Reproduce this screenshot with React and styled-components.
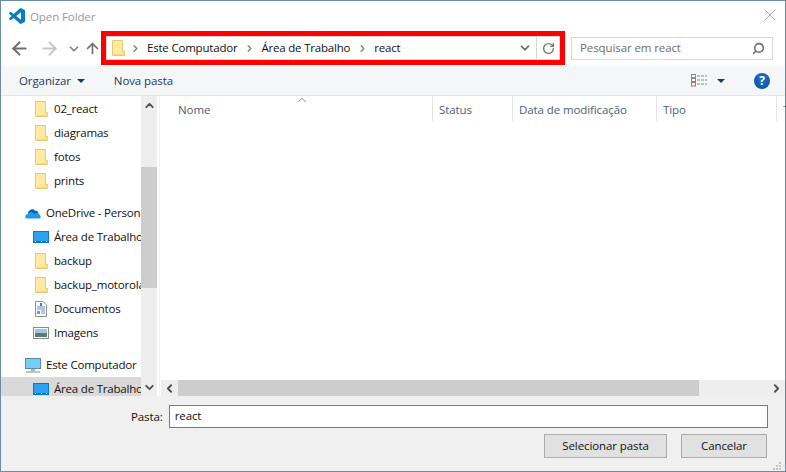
import React from 'react';
import styled, { createGlobalStyle } from 'styled-components';
import { ArrowLeft, ArrowRight, ArrowUp, ChevronDown, ChevronUp, ChevronLeft, ChevronRight, RotateCw, Search, X } from 'lucide-react';

const GlobalStyle = createGlobalStyle`
    html, body {
        margin: 0;
        padding: 0;
        background: #fff;
    }
`

const Window = styled.div`
    position: relative;
    width: 786px;
    height: 472px;
    box-sizing: border-box;
    border: 1px solid #6b8aa6;
    display: flex;
    flex-direction: column;
    overflow: hidden;
    background: #fff;
    font-family: "Open Sans", "Noto Sans", sans-serif;
    font-size: 11.5px;
    letter-spacing: -0.1px;
    color: #111;
`

const TitleBar = styled.div`
    height: 30px;
    display: flex;
    align-items: center;
    padding: 0 5px 0 8px;
    gap: 5px;
    flex-shrink: 0;
`

const Title = styled.span`
    color: #999;
    flex: 1;
`

const CloseIcon = styled(X)`
    margin-bottom: 2px;
    color: #8a8a8a;
`

const NavRow = styled.div`
    height: 35px;
    display: flex;
    align-items: center;
    flex-shrink: 0;
    padding-left: 8px;
`

const NavButton = styled.div`
    width: ${props => props.$width}px;
    box-sizing: border-box;
    padding-left: ${props => props.$inset || 0}px;
    display: flex;
    align-items: center;
    justify-content: ${props => props.$center ? 'center' : 'flex-start'};
    color: ${props => props.$color};
`

const Highlight = styled.div`
    width: 464px;
    height: 34px;
    box-sizing: border-box;
    border: 5px solid #fe0000;
    display: flex;
    margin-right: 6px;
    margin-top: -1px;
    position: relative;
`

const AddressBar = styled.div`
    flex: 1;
    border: 1px solid #d9d9d9;
    display: flex;
    align-items: center;
    padding-left: 5px;
`

const Crumb = styled.span`
    padding-bottom: 2px;
    letter-spacing: -0.2px;
`

const CrumbArrow = styled.div`
    display: flex;
    margin: ${props => props.$margin};
    color: #808080;
`

const AddressTools = styled.div`
    margin-left: auto;
    display: flex;
    align-items: center;
    height: 100%;
`

const DropZone = styled.div`
    width: 23px;
    height: 100%;
    display: flex;
    align-items: center;
    justify-content: center;
    color: #666;
    border-right: 1px solid #d9d9d9;
`

const RefreshZone = styled.div`
    width: 22px;
    display: flex;
    justify-content: center;
    color: #7a7a7a;
`

const SearchBox = styled.div`
    width: 202px;
    height: 23px;
    box-sizing: border-box;
    border: 1px solid #d9d9d9;
    display: flex;
    align-items: center;
    justify-content: space-between;
    padding: 0 7px 2px 8px;
    color: #6d6d6d;
`

const SearchIcon = styled(Search)`
    transform: scaleX(-1);
    margin-top: 2px;
`

const Toolbar = styled.div`
    height: 30px;
    flex-shrink: 0;
    box-sizing: border-box;
    background: #f5f6f7;
    border-bottom: 1px solid #e6e6e6;
    display: flex;
    align-items: center;
    padding: 0 15px 0 18px;
    color: #1e395b;
`

const Caret = styled.div`
    width: 0;
    height: 0;
    border-left: 4px solid transparent;
    border-right: 4px solid transparent;
    border-top: 4px solid #1e395b;
    margin: ${props => props.$margin};
`

const ViewTools = styled.div`
    margin-left: auto;
    display: flex;
    align-items: center;
`

const HelpBadge = styled.div`
    width: 16px;
    height: 16px;
    border-radius: 50%;
    background: radial-gradient(circle at 50% 35%, #1b74cc, #07509c);
    color: #fff;
    font-weight: 700;
    font-size: 12px;
    line-height: 16px;
    text-align: center;
    margin-left: 29px;
`

const Main = styled.div`
    flex: 1;
    display: flex;
    min-height: 0;
    overflow: hidden;
`

const Sidebar = styled.div`
    width: 140px;
    flex-shrink: 0;
    overflow: hidden;
    padding-top: 1px;
`

const NavItem = styled.div`
    height: 24px;
    box-sizing: border-box;
    padding-bottom: 2px;
    display: flex;
    align-items: center;
    gap: 5px;
    padding-left: ${props => props.$top ? '24px' : '32px'};
    white-space: nowrap;
    letter-spacing: -0.2px;
    background: ${props => props.$selected ? '#d9d9d9' : 'transparent'};
    margin-top: ${props => props.$spaced ? '8px' : '0'};
`

const IconSlot = styled.div`
    width: 16px;
    margin-top: 2px;
    display: flex;
    justify-content: center;
    flex-shrink: 0;
`

const VerticalScroll = styled.div`
    width: 16px;
    flex-shrink: 0;
    background: #eeeeee;
    display: flex;
    flex-direction: column;
    align-items: stretch;
`

const ScrollButton = styled.div`
    height: ${props => props.$size}px;
    width: ${props => props.$wide ? '17px' : 'auto'};
    display: flex;
    align-items: center;
    justify-content: center;
    color: #505050;
    flex-shrink: 0;
`

const VerticalThumb = styled.div`
    height: 121px;
    background: #cdcdcd;
    margin-top: 53px;
    margin-bottom: auto;
`

const Divider = styled.div`
    width: 2px;
    flex-shrink: 0;
    background: #fff;
`

const Content = styled.div`
    flex: 1;
    min-width: 0;
    display: flex;
    flex-direction: column;
    border-left: 1px solid #f3f3f3;
`

const Columns = styled.div`
    position: relative;
    height: 25px;
    display: flex;
    flex-shrink: 0;
`

const Column = styled.div`
    width: ${props => props.$width}px;
    box-sizing: border-box;
    flex-shrink: 0;
    padding-left: ${props => props.$pad || 6}px;
    border-right: ${props => props.$last ? 'none' : '1px solid #e5e5e5'};
    line-height: 28px;
    color: #4c607a;
`

const SortArrow = styled.div`
    position: absolute;
    left: 135px;
    top: -3px;
    color: #808080;
    display: flex;
`

const ListArea = styled.div`
    flex: 1;
`

const HorizontalScroll = styled.div`
    height: 16px;
    margin-left: 1px;
    background: #eeeeee;
    display: flex;
    flex-shrink: 0;
`

const HorizontalThumb = styled.div`
    width: 521px;
    background: #cdcdcd;
    margin-right: auto;
`

const Footer = styled.div`
    height: 75px;
    box-sizing: border-box;
    flex-shrink: 0;
    background: #f0f0f0;
    padding: 9px 17px 0 130px;
    display: flex;
    flex-direction: column;
`

const FolderRow = styled.div`
    display: flex;
    align-items: center;
    gap: 6px;
`

const FolderInput = styled.div`
    flex: 1;
    height: 23px;
    box-sizing: border-box;
    border: 1px solid #7a7a7a;
    background: #fff;
    padding-left: 5px;
    line-height: 19px;
`

const Buttons = styled.div`
    display: flex;
    justify-content: flex-end;
    gap: 14px;
    margin: 6px 1px 0 0;
`

const Button = styled.div`
    width: ${props => props.$width}px;
    height: 24px;
    box-sizing: border-box;
    border: 1px solid #adadad;
    background: #e1e1e1;
    text-align: center;
    line-height: 22px;
`

const Grip = styled.svg`
    position: absolute;
    right: 3px;
    bottom: 1px;
`

function VsCodeLogo() {
    return (
        <svg width="16" height="16" viewBox="0 0 24 24">
            <path fill="#0a7cc7" d="M23.15 2.587L18.21.21a1.494 1.494 0 0 0-1.705.29l-9.46 8.63-4.12-3.128a.999.999 0 0 0-1.276.057L.327 7.261A1 1 0 0 0 .326 8.74L3.899 12 .326 15.26a1 1 0 0 0 .001 1.479L1.65 17.94a.999.999 0 0 0 1.276.057l4.12-3.128 9.46 8.63a1.492 1.492 0 0 0 1.704.29l4.942-2.377A1.5 1.5 0 0 0 24 20.06V3.939a1.5 1.5 0 0 0-.85-1.352zm-5.146 14.861L10.826 12l7.178-5.448v10.896z" />
        </svg>
    );
}

function FolderIcon() {
    return (
        <svg width="13" height="16" viewBox="0 0 13 16">
            <path d="M0.5 0.5 H10.5 V11.5 H12.5 V15.5 H0.5 Z" fill="#ffe9a3" stroke="#ecc869" />
            <path d="M10.5 11.5 V14.5 H1.5" fill="none" stroke="#f3d98a" />
        </svg>
    );
}

function DesktopIcon() {
    return (
        <svg width="16" height="12" viewBox="0 0 16 12">
            <rect x="0" y="0" width="16" height="12" fill="#0a78c8" />
            <rect x="1" y="1" width="14" height="9" fill="#2fa0ee" />
            <rect x="2" y="10" width="1" height="1" fill="#fff" />
            <rect x="8" y="10" width="1" height="1" fill="#fff" />
            <rect x="13" y="10" width="1" height="1" fill="#fff" />
        </svg>
    );
}

function CloudIcon() {
    return (
        <svg width="16" height="11" viewBox="0 0 16 11">
            <path fill="#0a5fb4" d="M3 5 C4 1 9 0 10 3 C12 2 14 4 13 6 L4 8 Z" />
            <path fill="#1c9be8" d="M1 10.5 C-1 8 1 6 3 6 C4 4 8 3 9 6 C11 4 15 5 15 7.5 C16.5 9 15.5 10.5 14 10.5 Z" />
        </svg>
    );
}

function DocumentIcon() {
    return (
        <svg width="12" height="16" viewBox="0 0 12 16">
            <path d="M0.5 0.5 H8 L11.5 4 V15.5 H0.5 Z" fill="#fff" stroke="#8e8e8e" />
            <path d="M2 6 H10 M2 8 H10 M6 10 H10 M6 12 H10" stroke="#5d8fc4" />
            <rect x="2" y="10" width="3" height="3" fill="#6f9ac6" />
            <rect x="5" y="2" width="2" height="3" fill="#2f7fd0" />
        </svg>
    );
}

function ImageIcon() {
    return (
        <svg width="16" height="12" viewBox="0 0 16 12">
            <rect x="0.5" y="0.5" width="15" height="11" fill="#fff" stroke="#8a8a8a" />
            <rect x="2" y="2" width="12" height="4" fill="#9fc6e6" />
            <rect x="2" y="6" width="12" height="4" fill="#5b7f6a" />
        </svg>
    );
}

function ComputerIcon() {
    return (
        <svg width="16" height="15" viewBox="0 0 16 15">
            <rect x="0.5" y="0.5" width="15" height="10" fill="#74ccf8" stroke="#5f8aa8" />
            <rect x="6" y="11" width="4" height="2" fill="#a9b6c2" />
            <rect x="1" y="13" width="14" height="2" fill="#b9c4ce" />
        </svg>
    );
}

function ViewIcon() {
    return (
        <svg width="17" height="13" viewBox="0 0 17 13">
            <rect x="0.5" y="0.5" width="4" height="3" fill="none" stroke="#8a8a8a" />
            <rect x="0.5" y="4.5" width="4" height="3" fill="none" stroke="#8a8a8a" />
            <rect x="0.5" y="8.5" width="4" height="3.5" fill="none" stroke="#c06a5a" />
            <path d="M6 2 H16 M6 6 H16 M6 10 H16" stroke="#8a8a8a" strokeDasharray="3 1" />
        </svg>
    );
}

const favourites = ['02_react', 'diagramas', 'fotos', 'prints'];
const oneDrive = [
    { label: 'Área de Trabalho', icon: <DesktopIcon /> },
    { label: 'backup', icon: <FolderIcon /> },
    { label: 'backup_motorola', icon: <FolderIcon /> },
    { label: 'Documentos', icon: <DocumentIcon /> },
    { label: 'Imagens', icon: <ImageIcon /> },
];

function App() {
    return (
        <>
            <GlobalStyle />
            <Window>
                <TitleBar>
                    <VsCodeLogo />
                    <Title>Open Folder</Title>
                    <CloseIcon size={20} strokeWidth={0.9} />
                </TitleBar>
                <NavRow>
                    <NavButton $width={30} $color="#707070"><ArrowLeft size={21} strokeWidth={2.4} /></NavButton>
                    <NavButton $width={25} $color="#c8c8c8"><ArrowRight size={21} strokeWidth={2.4} /></NavButton>
                    <NavButton $width={19} $center $color="#808080"><ChevronDown size={14} strokeWidth={3} /></NavButton>
                    <NavButton $width={18} $inset={1} $color="#707070"><ArrowUp size={21} strokeWidth={2.4} /></NavButton>
                    <Highlight>
                        <AddressBar>
                            <FolderIcon />
                            <CrumbArrow $margin="0 6px 0 5px"><ChevronRight size={11} strokeWidth={3} /></CrumbArrow>
                            <Crumb>Este Computador</Crumb>
                            <CrumbArrow $margin="0 6px 0 7px"><ChevronRight size={11} strokeWidth={3} /></CrumbArrow>
                            <Crumb>Área de Trabalho</Crumb>
                            <CrumbArrow $margin="0 6px 0 7px"><ChevronRight size={11} strokeWidth={3} /></CrumbArrow>
                            <Crumb>react</Crumb>
                            <AddressTools>
                                <DropZone><ChevronDown size={14} strokeWidth={3} /></DropZone>
                                <RefreshZone><RotateCw size={13} strokeWidth={2.6} /></RefreshZone>
                            </AddressTools>
                        </AddressBar>
                    </Highlight>
                    <SearchBox>
                        Pesquisar em react
                        <SearchIcon size={13} strokeWidth={2.8} />
                    </SearchBox>
                </NavRow>
                <Toolbar>
                    <span>Organizar</span>
                    <Caret $margin="0 29px 0 6px" />
                    <span>Nova pasta</span>
                    <ViewTools>
                        <ViewIcon />
                        <Caret $margin="0 0 0 9px" />
                        <HelpBadge>?</HelpBadge>
                    </ViewTools>
                </Toolbar>
                <Main>
                    <Sidebar>
                        {favourites.map(name => (
                            <NavItem key={name}><IconSlot><FolderIcon /></IconSlot>{name}</NavItem>
                        ))}
                        <NavItem $top $spaced><IconSlot><CloudIcon /></IconSlot>OneDrive - Personal</NavItem>
                        {oneDrive.map(item => (
                            <NavItem key={item.label}><IconSlot>{item.icon}</IconSlot>{item.label}</NavItem>
                        ))}
                        <NavItem $top $spaced><IconSlot><ComputerIcon /></IconSlot>Este Computador</NavItem>
                        <NavItem $selected><IconSlot><DesktopIcon /></IconSlot>Área de Trabalho</NavItem>
                    </Sidebar>
                    <VerticalScroll>
                        <ScrollButton $size={18}><ChevronUp size={13} strokeWidth={3.5} /></ScrollButton>
                        <VerticalThumb />
                        <ScrollButton $size={17}><ChevronDown size={13} strokeWidth={3.5} /></ScrollButton>
                    </VerticalScroll>
                    <Divider />
                    <Content>
                        <Columns>
                            <SortArrow><ChevronUp size={14} strokeWidth={1.6} /></SortArrow>
                            <Column $width={273} $pad={18}>Nome</Column>
                            <Column $width={80}>Status</Column>
                            <Column $width={144}>Data de modificação</Column>
                            <Column $width={120}>Tipo</Column>
                            <Column $width={10} $last>T</Column>
                        </Columns>
                        <ListArea />
                        <HorizontalScroll>
                            <ScrollButton $size={16} $wide><ChevronLeft size={13} strokeWidth={3.5} /></ScrollButton>
                            <HorizontalThumb />
                            <ScrollButton $size={16} $wide><ChevronRight size={13} strokeWidth={3.5} /></ScrollButton>
                        </HorizontalScroll>
                    </Content>
                </Main>
                <Footer>
                    <FolderRow>
                        Pasta:
                        <FolderInput>react</FolderInput>
                    </FolderRow>
                    <Buttons>
                        <Button $width={123}>Selecionar pasta</Button>
                        <Button $width={86}>Cancelar</Button>
                    </Buttons>
                </Footer>
                <Grip width="9" height="8" viewBox="0 0 9 8">
                    <path fill="#c4c4c4" d="M6 0h2v2H6zM3 3h2v2H3zM6 3h2v2H6zM0 6h2v2H0zM3 6h2v2H3zM6 6h2v2H6z" />
                </Grip>
            </Window>
        </>
    );
}

export default App;
